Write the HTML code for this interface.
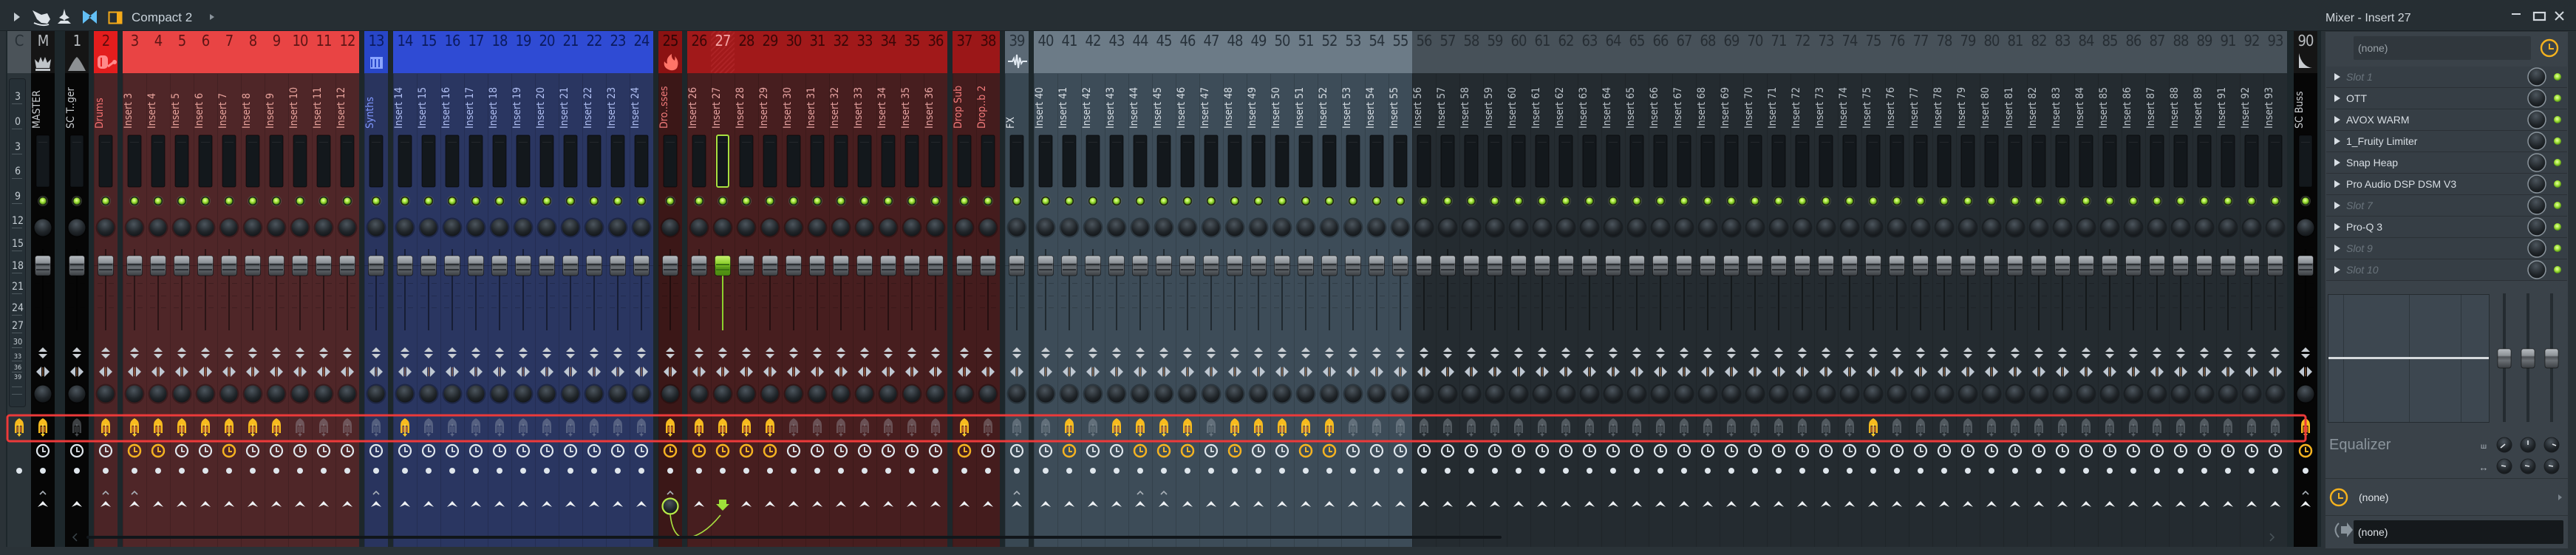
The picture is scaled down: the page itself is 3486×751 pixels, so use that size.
<!DOCTYPE html>
<html><head><meta charset="utf-8">
<style>
html,body{margin:0;padding:0}
body{width:3486px;height:751px;overflow:hidden;background:#2a3237;position:relative;font-family:"Liberation Sans",sans-serif}
#top{position:absolute;left:0;top:0;width:3486px;height:41px;background:#262e33;border-bottom:1px solid #1b2226}
#mix{position:absolute;left:8px;top:42px;width:3133px;height:698px;background:#1d272b}
.c{position:absolute;top:42px;width:32px;height:698px;box-sizing:border-box}
.c b{position:absolute;left:0;top:0;width:32px;height:57px;font:20px "DejaVu Sans Condensed","Liberation Sans",sans-serif;text-align:center;line-height:27px;font-weight:normal;letter-spacing:-1px}
.c i{position:absolute;left:0;top:64px;width:32px;height:68px;line-height:32px;writing-mode:vertical-rl;transform:rotate(180deg);font:14px "DejaVu Sans Condensed","Liberation Sans",sans-serif;font-style:normal;white-space:nowrap;overflow:hidden;text-align:start}
.X{background:#060606}.X b{background:#151515;color:#b9bdc1}.X i{color:#c9cdd1}
.R2{background:#4b2426}.R2 b{background:#e41d1d;color:#5e0c0c}.R2 i{color:#f47272}
.R{background:#4f2628}.R b{background:#e94444;color:#5e1515}.R i{color:#e8a39c}
.B1{background:#29345e}.B1 b{background:#2846c8;color:#0b1b5e}.B1 i{color:#8198ff}
.B{background:#2a3661}.B b{background:#2f4bd4;color:#0b1b5e}.B i{color:#b0bff2}
.D1{background:#3b1717}.D1 b{background:#8c1212;color:#2e0606}.D1 i{color:#f37b7b}
.D{background:#471e1f}.D b{background:#a1191a;color:#3a0707}.D i{color:#e6a3a1}
.D2{background:#441c1d}.D2 b{background:#9b1718;color:#3a0707}.D2 i{color:#f37b7b}
.G1{background:#394853}.G1 b{background:#5b6975;color:#27313a}.G1 i{color:#dfe5ea}
.G{background:#3d4c58}.G b{background:#6c7b87;color:#27313a}.G i{color:#d6dde3}
.K{background:#242b30}.K b{background:#475159;color:#262d33}.K i{color:#b9c1c8}
#sel b{background:repeating-linear-gradient(135deg,#a1191a 0 3px,#ad2325 3px 5px);color:#f5a5a5}
#cc{position:absolute;left:10px;top:42px;width:32px;height:698px;background:#2b3439}
#cc b{position:absolute;left:0;top:0;width:32px;height:57px;background:#4b5359;color:#283036;font:20px "DejaVu Sans Condensed","Liberation Sans",sans-serif;text-align:center;line-height:27px}
#panel{position:absolute;left:3146px;top:42px;width:330px;height:701px;background:#3a4249;border:1px solid #2c3338;box-sizing:border-box}
.sl{position:absolute;left:3148px;width:326px;height:28px;background:#363e45;border-bottom:1px solid #2b3136;font:14px "Liberation Sans",sans-serif;color:#d8dee4;line-height:28px}
.sl span{position:absolute;left:27px}
.sl em{color:#6a747c}
.sl:before{content:"";position:absolute;left:11px;top:9px;border-left:8px solid #d8dee4;border-top:5px solid transparent;border-bottom:5px solid transparent}
</style></head><body>
<div id="top"></div>
<div id="mix"></div>
<div id="cc"><b>C</b></div>

<div class="c X" style="left:42px"><b>M</b><i>MASTER</i></div>
<div class="c X" style="left:88px"><b>1</b><i>SC T..ger</i></div>
<div class="c R2" style="left:127px"><b>2</b><i>Drums</i></div>
<div class="c R" style="left:166px"><b>3</b><i>Insert 3</i></div>
<div class="c R" style="left:198px"><b>4</b><i>Insert 4</i></div>
<div class="c R" style="left:230px"><b>5</b><i>Insert 5</i></div>
<div class="c R" style="left:262px"><b>6</b><i>Insert 6</i></div>
<div class="c R" style="left:294px"><b>7</b><i>Insert 7</i></div>
<div class="c R" style="left:326px"><b>8</b><i>Insert 8</i></div>
<div class="c R" style="left:358px"><b>9</b><i>Insert 9</i></div>
<div class="c R" style="left:390px"><b>10</b><i>Insert 10</i></div>
<div class="c R" style="left:422px"><b>11</b><i>Insert 11</i></div>
<div class="c R" style="left:454px"><b>12</b><i>Insert 12</i></div>
<div class="c B1" style="left:493px"><b>13</b><i>Synths</i></div>
<div class="c B" style="left:532px"><b>14</b><i>Insert 14</i></div>
<div class="c B" style="left:564px"><b>15</b><i>Insert 15</i></div>
<div class="c B" style="left:596px"><b>16</b><i>Insert 16</i></div>
<div class="c B" style="left:628px"><b>17</b><i>Insert 17</i></div>
<div class="c B" style="left:660px"><b>18</b><i>Insert 18</i></div>
<div class="c B" style="left:692px"><b>19</b><i>Insert 19</i></div>
<div class="c B" style="left:724px"><b>20</b><i>Insert 20</i></div>
<div class="c B" style="left:756px"><b>21</b><i>Insert 21</i></div>
<div class="c B" style="left:788px"><b>22</b><i>Insert 22</i></div>
<div class="c B" style="left:820px"><b>23</b><i>Insert 23</i></div>
<div class="c B" style="left:852px"><b>24</b><i>Insert 24</i></div>
<div class="c D1" style="left:891px"><b>25</b><i>Dro..sses</i></div>
<div class="c D" style="left:930px"><b>26</b><i>Insert 26</i></div>
<div class="c D" id="sel" style="left:962px"><b>27</b><i>Insert 27</i></div>
<div class="c D" style="left:994px"><b>28</b><i>Insert 28</i></div>
<div class="c D" style="left:1026px"><b>29</b><i>Insert 29</i></div>
<div class="c D" style="left:1058px"><b>30</b><i>Insert 30</i></div>
<div class="c D" style="left:1090px"><b>31</b><i>Insert 31</i></div>
<div class="c D" style="left:1122px"><b>32</b><i>Insert 32</i></div>
<div class="c D" style="left:1154px"><b>33</b><i>Insert 33</i></div>
<div class="c D" style="left:1186px"><b>34</b><i>Insert 34</i></div>
<div class="c D" style="left:1218px"><b>35</b><i>Insert 35</i></div>
<div class="c D" style="left:1250px"><b>36</b><i>Insert 36</i></div>
<div class="c D2" style="left:1289px"><b>37</b><i>Drop Sub</i></div>
<div class="c D2" style="left:1321px"><b>38</b><i>Drop..b 2</i></div>
<div class="c G1" style="left:1360px"><b>39</b><i>FX</i></div>
<div class="c G" style="left:1399px"><b>40</b><i>Insert 40</i></div>
<div class="c G" style="left:1431px"><b>41</b><i>Insert 41</i></div>
<div class="c G" style="left:1463px"><b>42</b><i>Insert 42</i></div>
<div class="c G" style="left:1495px"><b>43</b><i>Insert 43</i></div>
<div class="c G" style="left:1527px"><b>44</b><i>Insert 44</i></div>
<div class="c G" style="left:1559px"><b>45</b><i>Insert 45</i></div>
<div class="c G" style="left:1591px"><b>46</b><i>Insert 46</i></div>
<div class="c G" style="left:1623px"><b>47</b><i>Insert 47</i></div>
<div class="c G" style="left:1655px"><b>48</b><i>Insert 48</i></div>
<div class="c G" style="left:1687px"><b>49</b><i>Insert 49</i></div>
<div class="c G" style="left:1719px"><b>50</b><i>Insert 50</i></div>
<div class="c G" style="left:1751px"><b>51</b><i>Insert 51</i></div>
<div class="c G" style="left:1783px"><b>52</b><i>Insert 52</i></div>
<div class="c G" style="left:1815px"><b>53</b><i>Insert 53</i></div>
<div class="c G" style="left:1847px"><b>54</b><i>Insert 54</i></div>
<div class="c G" style="left:1879px"><b>55</b><i>Insert 55</i></div>
<div class="c K" style="left:1911px"><b>56</b><i>Insert 56</i></div>
<div class="c K" style="left:1943px"><b>57</b><i>Insert 57</i></div>
<div class="c K" style="left:1975px"><b>58</b><i>Insert 58</i></div>
<div class="c K" style="left:2007px"><b>59</b><i>Insert 59</i></div>
<div class="c K" style="left:2039px"><b>60</b><i>Insert 60</i></div>
<div class="c K" style="left:2071px"><b>61</b><i>Insert 61</i></div>
<div class="c K" style="left:2103px"><b>62</b><i>Insert 62</i></div>
<div class="c K" style="left:2135px"><b>63</b><i>Insert 63</i></div>
<div class="c K" style="left:2167px"><b>64</b><i>Insert 64</i></div>
<div class="c K" style="left:2199px"><b>65</b><i>Insert 65</i></div>
<div class="c K" style="left:2231px"><b>66</b><i>Insert 66</i></div>
<div class="c K" style="left:2263px"><b>67</b><i>Insert 67</i></div>
<div class="c K" style="left:2295px"><b>68</b><i>Insert 68</i></div>
<div class="c K" style="left:2327px"><b>69</b><i>Insert 69</i></div>
<div class="c K" style="left:2359px"><b>70</b><i>Insert 70</i></div>
<div class="c K" style="left:2391px"><b>71</b><i>Insert 71</i></div>
<div class="c K" style="left:2423px"><b>72</b><i>Insert 72</i></div>
<div class="c K" style="left:2455px"><b>73</b><i>Insert 73</i></div>
<div class="c K" style="left:2487px"><b>74</b><i>Insert 74</i></div>
<div class="c K" style="left:2519px"><b>75</b><i>Insert 75</i></div>
<div class="c K" style="left:2551px"><b>76</b><i>Insert 76</i></div>
<div class="c K" style="left:2583px"><b>77</b><i>Insert 77</i></div>
<div class="c K" style="left:2615px"><b>78</b><i>Insert 78</i></div>
<div class="c K" style="left:2647px"><b>79</b><i>Insert 79</i></div>
<div class="c K" style="left:2679px"><b>80</b><i>Insert 80</i></div>
<div class="c K" style="left:2711px"><b>81</b><i>Insert 81</i></div>
<div class="c K" style="left:2743px"><b>82</b><i>Insert 82</i></div>
<div class="c K" style="left:2775px"><b>83</b><i>Insert 83</i></div>
<div class="c K" style="left:2807px"><b>84</b><i>Insert 84</i></div>
<div class="c K" style="left:2839px"><b>85</b><i>Insert 85</i></div>
<div class="c K" style="left:2871px"><b>86</b><i>Insert 86</i></div>
<div class="c K" style="left:2903px"><b>87</b><i>Insert 87</i></div>
<div class="c K" style="left:2935px"><b>88</b><i>Insert 88</i></div>
<div class="c K" style="left:2967px"><b>89</b><i>Insert 89</i></div>
<div class="c K" style="left:2999px"><b>91</b><i>Insert 91</i></div>
<div class="c K" style="left:3031px"><b>92</b><i>Insert 92</i></div>
<div class="c K" style="left:3063px"><b>93</b><i>Insert 93</i></div>
<div class="c X" style="left:3104px"><b>90</b><i>SC Buss</i></div>

<div id="panel"></div>
<div class="sl" style="top:90px"><span><em><i>Slot 1</i></em></span></div>
<div class="sl" style="top:119px"><span>OTT</span></div>
<div class="sl" style="top:148px"><span>AVOX WARM</span></div>
<div class="sl" style="top:177px"><span>1_Fruity Limiter</span></div>
<div class="sl" style="top:206px"><span>Snap Heap</span></div>
<div class="sl" style="top:235px"><span>Pro Audio DSP DSM V3</span></div>
<div class="sl" style="top:264px"><span><em><i>Slot 7</i></em></span></div>
<div class="sl" style="top:293px"><span>Pro-Q 3</span></div>
<div class="sl" style="top:322px"><span><em><i>Slot 9</i></em></span></div>
<div class="sl" style="top:351px"><span><em><i>Slot 10</i></em></span></div>

<svg width="3486" height="751" style="position:absolute;left:0;top:0" xmlns="http://www.w3.org/2000/svg">
<defs>
<radialGradient id="led" cx=".45" cy=".4" r=".6"><stop offset="0" stop-color="#eaffa8"/><stop offset=".5" stop-color="#a6e53c"/><stop offset="1" stop-color="#4d8a12"/></radialGradient>
<radialGradient id="kn" cx=".45" cy=".3" r=".75"><stop offset="0" stop-color="#4c555d"/><stop offset=".65" stop-color="#1f2428"/><stop offset="1" stop-color="#111417"/></radialGradient>
<linearGradient id="fd" x1="0" y1="0" x2="0" y2="1"><stop offset="0" stop-color="#b8bdc2"/><stop offset=".35" stop-color="#8d9297"/><stop offset=".42" stop-color="#4d5156"/><stop offset=".6" stop-color="#6b7075"/><stop offset="1" stop-color="#3b3f43"/></linearGradient>
<linearGradient id="fdg" x1="0" y1="0" x2="0" y2="1"><stop offset="0" stop-color="#c8f070"/><stop offset=".4" stop-color="#8cd02c"/><stop offset=".6" stop-color="#5a9a18"/><stop offset="1" stop-color="#4a8a10"/></linearGradient>
<pattern id="p" width="32" height="751" patternUnits="userSpaceOnUse">
 <rect x="0" y="100" width="1" height="640" fill="rgba(0,0,0,.15)"/>
 <rect x="7" y="183" width="18" height="70" rx="2" fill="#13181c" stroke="rgba(0,0,0,.6)"/>
 <rect x="10" y="192" width="12" height="1" fill="rgba(255,255,255,.07)"/>
 <circle cx="16" cy="272" r="6.5" fill="#1c2414" stroke="rgba(255,255,255,.15)"/>
 <circle cx="16" cy="272" r="4.6" fill="url(#led)"/>
 <circle cx="16" cy="308" r="13.5" fill="rgba(0,0,0,.28)"/>
 <circle cx="16" cy="308" r="11.5" fill="url(#kn)"/>
 <rect x="0" y="359" width="32" height="1" fill="rgba(0,0,0,.22)"/>
 <rect x="15" y="337" width="2" height="110" fill="rgba(0,0,0,.45)"/>
 <rect x="5" y="383" width="7" height="1" fill="rgba(0,0,0,.2)"/><rect x="20" y="383" width="7" height="1" fill="rgba(0,0,0,.2)"/>
 <rect x="5" y="400" width="7" height="1" fill="rgba(0,0,0,.2)"/><rect x="20" y="400" width="7" height="1" fill="rgba(0,0,0,.2)"/>
 <rect x="5" y="416" width="7" height="1" fill="rgba(0,0,0,.2)"/><rect x="20" y="416" width="7" height="1" fill="rgba(0,0,0,.2)"/>
 <rect x="5.5" y="346" width="21" height="27" rx="3" fill="url(#fd)" stroke="rgba(0,0,0,.5)"/>
 <rect x="7" y="357" width="18" height="2" fill="#2b2f33"/><rect x="7" y="364" width="18" height="2" fill="#2b2f33"/>
 <path d="M10 476 L16 470 L22 476Z M10 479 L16 485 L22 479Z" fill="#c9ced3"/>
 <path d="M7 503 L14 496 L14 510Z M25 503 L18 496 L18 510Z" fill="#bfc8d2"/>
 <rect x="15.5" y="497" width="1" height="12" fill="#b07040"/>
 <circle cx="16" cy="533" r="13.5" fill="rgba(0,0,0,.28)"/>
 <circle cx="16" cy="533" r="11.5" fill="url(#kn)"/>
 <path d="M10 586 V575 Q10 569 16 566 Q22 569 22 575 V586 H19.5 V576 H12.5 V586Z" fill="rgba(175,185,195,.33)"/>
 <path d="M14 577 V585 M16 574 V588 M18 577 V585" stroke="rgba(175,185,195,.33)" stroke-width="1.4"/>
 <path d="M13 587 L16 591 L19 587Z" fill="rgba(175,185,195,.33)"/>
 <circle cx="16" cy="610" r="8" fill="none" stroke="#dfe6ec" stroke-width="2.2"/>
 <path d="M16 605 V611 H20" fill="none" stroke="#dfe6ec" stroke-width="1.8"/>
 <circle cx="16" cy="637" r="4" fill="#dfe6ec"/>
 <path d="M9 686 L16 678 L23 686 L16 683Z" fill="#eef1f4"/>
</pattern>
<g id="ro">
 <path d="M10 586 V575 Q10 569 16 566 Q22 569 22 575 V586 H19.5 V576 H12.5 V586Z" fill="#f7bb1e"/>
 <path d="M14 577 V585 M18 577 V585" stroke="#e86a14" stroke-width="1.4"/>
 <path d="M16 574 V588" stroke="#ffd84a" stroke-width="1.6"/>
 <path d="M13 587 L16 591 L19 587Z" fill="#ffcc22"/>
</g>
<g id="co">
 <circle cx="16" cy="610" r="8" fill="none" stroke="#f5b21e" stroke-width="2.4"/>
 <path d="M16 605 V611 H20" fill="none" stroke="#f5b21e" stroke-width="1.9"/>
</g>
<path id="ca" d="M12 669 L16 665 L20 669" fill="none" stroke="#a9b0b8" stroke-width="1.6"/>
</defs>

<path d="M19 17 L27 23 L19 29Z" fill="#c4ccd2"/>
<path d="M44 14 L56 20 L64 18 L68 26 L64 32 L56 31 L50 26 Z" fill="#dde3e8"/><path d="M46 31 Q58 36 66 33" stroke="#dde3e8" stroke-width="2" fill="none"/>
<path d="M87 12 L89 20 L94 24 L89 26 L87 28 L85 26 L80 24 L85 20Z M78 32 H96 L92 28 H82Z" fill="#dde3e8"/>
<path d="M112 14 L124 22 L112 32Z M131 14 L120 23 L131 32Z" fill="#62bff5"/>
<rect x="147.5" y="16.5" width="17" height="15" fill="none" stroke="#f4aa1a" stroke-width="2"/><rect x="158" y="17" width="6" height="14" fill="#f4aa1a"/>
<text x="178" y="29" font-family="Liberation Sans,sans-serif" font-size="17" fill="#c8d2da">Compact 2</text>
<path d="M284 19 L290 23 L284 27Z" fill="#8a949c"/>

<rect transform="translate(42,0)" width="32" height="740" fill="url(#p)"/>
<rect transform="translate(88,0)" width="32" height="740" fill="url(#p)"/>
<rect transform="translate(127,0)" width="32" height="740" fill="url(#p)"/>
<rect transform="translate(166,0)" width="320" height="740" fill="url(#p)"/>
<rect transform="translate(493,0)" width="32" height="740" fill="url(#p)"/>
<rect transform="translate(532,0)" width="352" height="740" fill="url(#p)"/>
<rect transform="translate(891,0)" width="32" height="740" fill="url(#p)"/>
<rect transform="translate(930,0)" width="352" height="740" fill="url(#p)"/>
<rect transform="translate(1289,0)" width="64" height="740" fill="url(#p)"/>
<rect transform="translate(1360,0)" width="32" height="740" fill="url(#p)"/>
<rect transform="translate(1399,0)" width="1696" height="740" fill="url(#p)"/>
<rect transform="translate(3104,0)" width="32" height="740" fill="url(#p)"/>

<rect x="12.5" y="106.5" width="22" height="444" rx="3" fill="#263036" stroke="#1a2126"/>
<g font-family="DejaVu Sans Condensed,Liberation Sans,sans-serif" font-size="14" fill="#c4ccd2" text-anchor="middle">
<text x="24" y="135">3</text><text x="24" y="169">0</text><text x="24" y="203">3</text><text x="24" y="236">6</text><text x="24" y="270">9</text><text x="24" y="303">12</text><text x="24" y="334">15</text><text x="24" y="364">18</text><text x="24" y="392">21</text><text x="24" y="421">24</text><text x="24" y="445">27</text>
<text x="24" y="466" font-size="11">30</text><text x="24" y="485" font-size="9">33</text><text x="24" y="500" font-size="9">36</text><text x="24" y="513" font-size="9">39</text>
</g>
<g fill="rgba(200,210,220,.25)"><rect x="16" y="140" width="14" height="1"/><rect x="16" y="174" width="14" height="1"/><rect x="16" y="208" width="14" height="1"/><rect x="16" y="241" width="14" height="1"/><rect x="16" y="275" width="14" height="1"/><rect x="16" y="308" width="14" height="1"/><rect x="16" y="339" width="14" height="1"/><rect x="16" y="369" width="14" height="1"/><rect x="16" y="397" width="14" height="1"/><rect x="16" y="426" width="14" height="1"/><rect x="16" y="450" width="14" height="1"/><rect x="16" y="470" width="14" height="1"/><rect x="16" y="488" width="14" height="1"/><rect x="16" y="503" width="14" height="1"/><rect x="16" y="523" width="14" height="1"/><rect x="16" y="533" width="14" height="1"/></g>
<circle cx="26" cy="637" r="4" fill="#dfe6ec"/>

<path d="M49 92 L47 80 L52 85 L55 77 L58 84 L61 77 L64 85 L69 80 L67 92Z" fill="#c0c5c9"/><rect x="48" y="93" width="20" height="3" fill="#c0c5c9"/>
<path d="M92 96 Q100 80 104 77 Q108 80 116 96Z" fill="#8d9194"/>
<rect x="132" y="75" width="14" height="18" rx="5" fill="#ff8a8a"/><rect x="136" y="78" width="2" height="12" fill="#e41d1d"/><path d="M146 90 L154 84" stroke="#ff8a8a" stroke-width="3"/><circle cx="155" cy="84" r="3" fill="#ff8a8a"/>
<path d="M500 76 H519 V94 H500Z M503 80 V91 M508 80 V91 M513 80 V91" fill="#8aa4ff" stroke="#2846c8" stroke-width="2"/>
<path d="M907 95 Q897 92 899 83 Q901 86 903 86 Q901 78 909 73 Q908 79 913 82 Q914 78 913 76 Q920 83 916 92 Q913 96 907 95Z" fill="#ff7468"/>
<path d="M1364 83 H1370 L1372 79 L1374 88 L1376 74 L1378 92 L1380 78 L1382 86 L1384 83 H1390" stroke="#e0e8f0" stroke-width="2" fill="none"/>
<path d="M3111 72 V92 H3129 Q3115 90 3111 72Z" fill="#c8ccd0"/>

<rect x="970" y="183" width="16" height="70" rx="2" fill="none" stroke="#a8e040" stroke-width="2"/>
<rect x="977" y="373" width="2" height="74" fill="#8cd02c"/>
<rect x="967.5" y="346" width="21" height="27" rx="3" fill="url(#fdg)" stroke="rgba(0,0,0,.4)"/>
<rect x="969" y="357" width="18" height="2" fill="#3c7410"/><rect x="969" y="364" width="18" height="2" fill="#3c7410"/>

<use href="#ro" x="10"/><use href="#ro" x="42"/><use href="#ro" x="127"/>
<use href="#ro" x="166"/><use href="#ro" x="198"/><use href="#ro" x="230"/><use href="#ro" x="262"/><use href="#ro" x="294"/><use href="#ro" x="326"/><use href="#ro" x="358"/>
<use href="#ro" x="532"/><use href="#ro" x="891"/><use href="#ro" x="930"/><use href="#ro" x="962"/><use href="#ro" x="994"/><use href="#ro" x="1026"/>
<use href="#ro" x="1289"/><use href="#ro" x="1431"/><use href="#ro" x="1495"/><use href="#ro" x="1527"/><use href="#ro" x="1559"/><use href="#ro" x="1591"/>
<use href="#ro" x="1655"/><use href="#ro" x="1687"/><use href="#ro" x="1719"/><use href="#ro" x="1751"/><use href="#ro" x="1783"/><use href="#ro" x="2519"/><use href="#ro" x="3104"/>
<use href="#co" x="166"/><use href="#co" x="198"/><use href="#co" x="294"/>
<use href="#co" x="891"/><use href="#co" x="930"/><use href="#co" x="962"/><use href="#co" x="994"/><use href="#co" x="1026"/>
<use href="#co" x="1289"/><use href="#co" x="1431"/><use href="#co" x="1527"/><use href="#co" x="1559"/><use href="#co" x="1591"/><use href="#co" x="1655"/><use href="#co" x="1751"/><use href="#co" x="1783"/><use href="#co" x="3104"/>
<use href="#ca" x="42"/><use href="#ca" x="127"/><use href="#ca" x="166"/><use href="#ca" x="493"/><use href="#ca" x="891"/><use href="#ca" x="1360"/><use href="#ca" x="1527"/><use href="#ca" x="1559"/><use href="#ca" x="3104"/>

<rect x="10" y="562" width="3110" height="35" rx="3" fill="none" stroke="#ec3a3a" stroke-width="3"/>

<rect x="893" y="675" width="28" height="14" fill="#3b1717"/>
<circle cx="907" cy="685" r="10.5" fill="url(#kn)" stroke="#b8ec48" stroke-width="2.2"/>
<rect x="966" y="675" width="24" height="14" fill="#471e1f"/>
<path d="M973 676 H983 V682 H987 L978 691 L969 682 H973Z" fill="#9ee03a"/>
<path d="M907 696 Q910 725 925 728 Q950 728 975 697" fill="none" stroke="#a8e040" stroke-width="1.6"/>

<rect x="117" y="725" width="1915" height="4" rx="2" fill="#11161a"/>
<path d="M104 722 L99 727 L104 732" fill="none" stroke="#3a444a" stroke-width="1.5"/>
<path d="M3072 722 L3077 727 L3072 732" fill="none" stroke="#4a545a" stroke-width="1.5"/>

<text x="3147" y="29" font-family="Liberation Sans,sans-serif" font-size="16" fill="#d2d8de">Mixer - Insert 27</text>
<rect x="3399" y="18" width="12" height="2" fill="#d2d8de"/>
<rect x="3429" y="17" width="15" height="10" fill="none" stroke="#d2d8de" stroke-width="2.2"/>
<path d="M3458 16 L3469 27 M3469 16 L3458 27" stroke="#d2d8de" stroke-width="2"/>
<rect x="3185" y="49" width="240" height="32" rx="2" fill="#30373d"/>
<text x="3191" y="70" font-family="Liberation Sans,sans-serif" font-size="14" fill="#9aa2a8">(none)</text>
<circle cx="3450" cy="65" r="11" fill="none" stroke="#f5b21e" stroke-width="2.4"/><path d="M3450 59 V66 H3456" fill="none" stroke="#f5b21e" stroke-width="2"/>
<g>
<circle cx="3433" cy="104" r="12" fill="url(#kn)" stroke="#8a949c" stroke-width="1.5"/><circle cx="3461" cy="104" r="5" fill="url(#led)"/>
<circle cx="3433" cy="133" r="12" fill="url(#kn)" stroke="#8a949c" stroke-width="1.5"/><circle cx="3461" cy="133" r="5" fill="url(#led)"/>
<circle cx="3433" cy="162" r="12" fill="url(#kn)" stroke="#8a949c" stroke-width="1.5"/><circle cx="3461" cy="162" r="5" fill="url(#led)"/>
<circle cx="3433" cy="191" r="12" fill="url(#kn)" stroke="#8a949c" stroke-width="1.5"/><circle cx="3461" cy="191" r="5" fill="url(#led)"/>
<circle cx="3433" cy="220" r="12" fill="url(#kn)" stroke="#8a949c" stroke-width="1.5"/><circle cx="3461" cy="220" r="5" fill="url(#led)"/>
<circle cx="3433" cy="249" r="12" fill="url(#kn)" stroke="#8a949c" stroke-width="1.5"/><circle cx="3461" cy="249" r="5" fill="url(#led)"/>
<circle cx="3433" cy="278" r="12" fill="url(#kn)" stroke="#8a949c" stroke-width="1.5"/><circle cx="3461" cy="278" r="5" fill="url(#led)"/>
<circle cx="3433" cy="307" r="12" fill="url(#kn)" stroke="#8a949c" stroke-width="1.5"/><circle cx="3461" cy="307" r="5" fill="url(#led)"/>
<circle cx="3433" cy="336" r="12" fill="url(#kn)" stroke="#8a949c" stroke-width="1.5"/><circle cx="3461" cy="336" r="5" fill="url(#led)"/>
<circle cx="3433" cy="365" r="12" fill="url(#kn)" stroke="#8a949c" stroke-width="1.5"/><circle cx="3461" cy="365" r="5" fill="url(#led)"/>
</g>
<rect x="3150.5" y="398.5" width="218" height="173" fill="#3d4750" stroke="#252b30"/>
<rect x="3171" y="399" width="1" height="172" fill="#2e363c"/><rect x="3260" y="399" width="1" height="172" fill="#2e363c"/><rect x="3330" y="399" width="1" height="172" fill="#2e363c"/>
<rect x="3151" y="483" width="217" height="3" fill="#d6dadd"/>
<g fill="#252c31"><rect x="3387" y="397" width="4" height="174"/><rect x="3419" y="397" width="4" height="174"/><rect x="3451" y="397" width="4" height="174"/></g>
<g fill="url(#fd)" stroke="rgba(0,0,0,.5)"><rect x="3380" y="472" width="18" height="26" rx="3"/><rect x="3412" y="472" width="18" height="26" rx="3"/><rect x="3444" y="472" width="18" height="26" rx="3"/></g>
<text x="3152" y="608" font-family="Liberation Sans,sans-serif" font-size="20" fill="#8a949c">Equalizer</text>
<text x="3361" y="607" font-family="Liberation Sans,sans-serif" font-size="10" fill="#b0b8c0" text-anchor="middle">ш</text>
<text x="3361" y="637" font-family="Liberation Sans,sans-serif" font-size="13" fill="#b0b8c0" text-anchor="middle">↔</text>
<g fill="url(#kn)" stroke="#1a1e21"><circle cx="3389" cy="602" r="10"/><circle cx="3421" cy="602" r="10"/><circle cx="3453" cy="602" r="10"/><circle cx="3389" cy="631" r="10"/><circle cx="3421" cy="631" r="10"/><circle cx="3453" cy="631" r="10"/></g>
<g stroke="#dfe4e8" stroke-width="1.6"><path d="M3384 606 L3390 601"/><path d="M3421 596 V602"/><path d="M3454 601 L3459 603"/><path d="M3385 630 L3391 631"/><path d="M3417 630 L3423 631"/><path d="M3449 630 L3455 631"/></g>
<rect x="3147" y="647" width="328" height="1" fill="#2c3338"/>
<circle cx="3165" cy="673" r="11" fill="none" stroke="#f5b21e" stroke-width="2.4"/><path d="M3165 667 V674 H3171" fill="none" stroke="#f5b21e" stroke-width="2"/>
<text x="3192" y="678" font-family="Liberation Sans,sans-serif" font-size="14" fill="#dfe4e8">(none)</text>
<path d="M3462 669 L3467 673 L3462 677Z" fill="#7a848c"/>
<rect x="3147" y="697" width="328" height="1" fill="#2c3338"/>
<path d="M3168 712 H3176 V707 L3184 717 L3176 727 V722 H3168Z" fill="#8a949c"/><path d="M3165 708 Q3156 717 3165 727" fill="none" stroke="#8a949c" stroke-width="2"/>
<rect x="3185" y="704" width="284" height="32" rx="2" fill="#15191c"/>
<text x="3191" y="725" font-family="Liberation Sans,sans-serif" font-size="14" fill="#dfe4e8">(none)</text>
</svg>
</body></html>
